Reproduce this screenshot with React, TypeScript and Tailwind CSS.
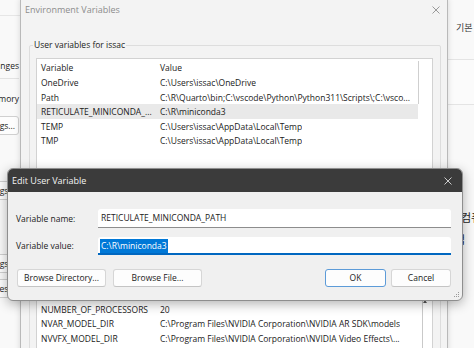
import type { ReactNode } from 'react';

type EnvVar = { name: string; value: string; selected?: boolean };

const userVars: EnvVar[] = [
  { name: 'OneDrive', value: 'C:\\Users\\issac\\OneDrive' },
  { name: 'Path', value: 'C:\\R\\Quarto\\bin;C:\\vscode\\Python\\Python311\\Scripts\\;C:\\vsco...' },
  { name: 'RETICULATE_MINICONDA_...', value: 'C:\\R\\miniconda3', selected: true },
  { name: 'TEMP', value: 'C:\\Users\\issac\\AppData\\Local\\Temp' },
  { name: 'TMP', value: 'C:\\Users\\issac\\AppData\\Local\\Temp' },
];

// only the rows that show below the edit dialog
const systemVars: EnvVar[] = [
  { name: 'NUMBER_OF_PROCESSORS', value: '20' },
  { name: 'NVAR_MODEL_DIR', value: 'C:\\Program Files\\NVIDIA Corporation\\NVIDIA AR SDK\\models' },
  { name: 'NVVFX_MODEL_DIR', value: 'C:\\Program Files\\NVIDIA Corporation\\NVIDIA Video Effects\\...' },
];

function CloseIcon({ className }: { className: string }) {
  return (
    <svg width="8" height="8" viewBox="0 0 8 8" className={className}>
      <path d="M0.5 0.5 L7.5 7.5 M7.5 0.5 L0.5 7.5" stroke="currentColor" strokeWidth="0.9" fill="none" />
    </svg>
  );
}

function VarRow({ v }: { v: EnvVar }) {
  return (
    <div className={`flex h-[14.6px] items-center leading-[13px] ${v.selected ? 'bg-[#e9e9e9]' : ''}`}>
      <div className="w-[118px] shrink-0 overflow-hidden whitespace-nowrap pl-[4px]">{v.name}</div>
      <div className="overflow-hidden whitespace-nowrap pl-[5px]">{v.value}</div>
    </div>
  );
}

function VarList({
  rows,
  header,
  className,
  children,
}: {
  rows: EnvVar[];
  header?: boolean;
  className: string;
  children?: ReactNode;
}) {
  return (
    <div className={`relative ml-[6px] w-[397px] border border-[#d2d2d2] bg-white ${className}`}>
      <div className="mr-[14px]">
        {header && <VarRow v={{ name: 'Variable', value: 'Value' }} />}
        {rows.map((v) => (
          <VarRow key={v.name} v={v} />
        ))}
      </div>
      {children}
    </div>
  );
}

function Button({ label, width, primary }: { label: string; width: string; primary?: boolean }) {
  return (
    <div
      className={`flex h-[18px] items-center justify-center rounded-[3px] border bg-[#fdfdfd] ${width} ${
        primary ? 'border-[#5c9bd8]' : 'border-[#d6d6d6] border-b-[#c4c4c4]'
      }`}
    >
      {label}
    </div>
  );
}

export default function App() {
  return (
    <div className="relative h-[348px] w-[474px] overflow-hidden bg-[#f7f7f7] font-['Open_Sans','Noto_Sans_CJK_KR',sans-serif] text-[8.5px] leading-none text-[#1b1b1b]">
      {/* System Properties, behind on the left */}
      <div className="absolute left-0 top-0 h-full w-[21px] overflow-hidden bg-[#f9f9f9]">
        <div className="h-[16px] border-b border-[#e6e6e6]" />
        <div className="flex flex-col items-end whitespace-nowrap pr-[2px] leading-[11px]">
          <div className="mt-[44px]">make most of these changes</div>
          <div className="mt-[7px] w-[40px] border-t border-[#e2e2e2]" />
          <div className="mt-[14px]">and virtual memory</div>
          <div className="mt-[12px] flex h-[19px] items-center rounded-[3px] border border-[#d0d0d0] bg-[#fdfdfd] px-[3px]">Settings...</div>
          <div className="mt-[46px] flex h-[19px] items-center rounded-[3px] border border-[#d0d0d0] bg-[#fdfdfd] px-[3px]">Settings...</div>
          <div className="mt-[54px] flex h-[19px] items-center rounded-[3px] border border-[#d0d0d0] bg-[#fdfdfd] px-[3px]">Settings...</div>
          <div className="mt-[6px] flex h-[19px] items-center rounded-[3px] border border-[#d0d0d0] bg-[#fdfdfd] px-[3px]">Environment Variables...</div>
        </div>
      </div>

      {/* Window behind on the right */}
      <div className="absolute left-[448px] top-0 h-full w-[40px] overflow-hidden bg-[#f9f9f9]">
        <div className="h-[60px] whitespace-nowrap border-b border-[#e4e4e4] pl-[8px] pt-[23px] text-[9px] text-[#3a3a3a]">기본 설정</div>
        <div className="h-[45px] border-b border-[#e4e4e4] bg-[#fbfbfb]" />
        <div className="mt-[107px] whitespace-nowrap pl-[13px] text-[11px]">컴퓨터</div>
        <div className="mt-[11px] whitespace-nowrap pl-[7px] text-[11px]">법</div>
      </div>

      {/* Environment Variables */}
      <div className="absolute left-[20px] top-[-1px] h-[362px] w-[428px] border border-[#b9b9b9] bg-[#f3f3f3] shadow-[0_0_6px_rgba(0,0,0,0.14)]">
        <div className="flex h-[19px] items-center justify-between pl-[4px] pr-[7px] text-[#8c8c8c]">
          <span className="text-[9px]">Environment Variables</span>
          <CloseIcon className="text-[#8f8f8f]" />
        </div>

        <div className="relative ml-[8px] mt-[26px] h-[150px] w-[412px] rounded-[2px] border border-[#dddddd]">
          <span className="absolute left-[3px] top-[-7px] bg-[#f3f3f3] px-[1px] leading-[12px]">User variables for issac</span>
          <VarList rows={userVars} header className="mt-[12px] h-[140px] pt-[1.6px]">
            <div className="absolute left-[381px] top-[2px] h-[43px] w-px bg-[#cfcfcf]" />
          </VarList>
        </div>

        {/* System variables: its upper part lies under the edit dialog */}
        <div className="relative ml-[8px] mt-[5px] h-[200px] w-[412px] rounded-[2px] border border-[#dddddd]">
          <VarList rows={systemVars} className="mt-[11px] h-[180px] pt-[89px]">
            <div className="absolute left-[385px] top-[86px] h-[60px] w-px bg-[#c9c9c9]" />
            <div className="absolute left-[386px] top-[87px] h-0 w-0 border-x-[2px] border-b-[3px] border-x-transparent border-b-[#555]" />
          </VarList>
        </div>
      </div>

      {/* Edit User Variable */}
      <div className="absolute left-[7px] top-[168px] h-[133px] w-[456px] overflow-hidden rounded-[6px] border border-[#8e8e8e] bg-[#f0f0f0] shadow-[0_3px_12px_rgba(0,0,0,0.3)]">
        <div className="flex h-[23px] items-center justify-between bg-[#3b3b3b] pl-[4px] pr-[10px] text-[#f3f3f3]">
          <span className="text-[9px]">Edit User Variable</span>
          <CloseIcon className="text-[#dcdcdc]" />
        </div>

        <div className="flex flex-col pl-[8px] pr-[11px] pt-[17px] leading-[12px]">
          <div className="flex items-center">
            <span className="w-[82px] shrink-0">Variable name:</span>
            <div className="flex h-[19px] flex-1 items-center rounded-t-[3px] border-b border-[#8d8d8d] bg-white pl-[3px]">
              RETICULATE_MINICONDA_PATH
            </div>
          </div>
          <div className="mt-[9px] flex items-center">
            <span className="w-[82px] shrink-0">Variable value:</span>
            <div className="flex h-[18px] flex-1 items-center rounded-t-[3px] border-b-2 border-[#0067c0] bg-white pl-[2px] pt-[1px]">
              <span className="bg-[#0078d7] px-[1px] py-[1px] text-white">C:\R\miniconda3</span>
            </div>
          </div>
          <div className="ml-[1px] mt-[14px] flex items-center gap-[7px]">
            <Button label="Browse Directory..." width="w-[89px]" />
            <Button label="Browse File..." width="w-[89px]" />
            <div className="flex-1" />
            <div className="flex gap-[5px]">
              <Button label="OK" width="w-[61px]" primary />
              <Button label="Cancel" width="w-[60px]" />
            </div>
          </div>
        </div>

        <svg width="6" height="6" viewBox="0 0 6 6" className="absolute bottom-[2px] right-[2px] text-[#9a9a9a]">
          <rect x="4" y="0" width="1" height="1" fill="currentColor" />
          <rect x="2" y="2" width="1" height="1" fill="currentColor" />
          <rect x="4" y="2" width="1" height="1" fill="currentColor" />
          <rect x="0" y="4" width="1" height="1" fill="currentColor" />
          <rect x="2" y="4" width="1" height="1" fill="currentColor" />
          <rect x="4" y="4" width="1" height="1" fill="currentColor" />
        </svg>
      </div>
    </div>
  );
}
